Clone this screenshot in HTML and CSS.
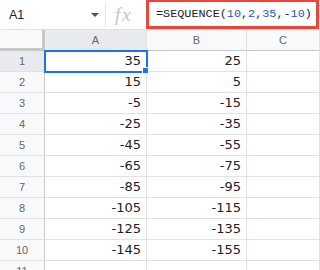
FILE: index.html
```html
<!DOCTYPE html>
<html lang="en">
<head>
    <meta charset="UTF-8">
    <meta name="viewport" content="width=device-width, initial-scale=1.0">
    <title>Sheet</title>
    <link rel="stylesheet" href="styles.css">
</head>
<body>
    <div class="sheet">
        <div class="toolbar">
            <div class="namebox">
                <span class="cell-ref">A1</span>
                <span class="caret"></span>
            </div>
            <div class="divider"></div>
            <div class="fx">fx</div>
            <div class="formula">=SEQUENCE(<span class="num">10</span>,<span class="num">2</span>,<span class="num">35</span>,-<span class="num">10</span>)</div>
        </div>
        <div class="grid" id="grid">
            <div class="corner"></div>
            <div class="col-head selected">A</div>
            <div class="col-head">B</div>
            <div class="col-head">C</div>
        </div>
    </div>

    <script>
        // fill the rows with the SEQUENCE output
        const grid = document.getElementById("grid");
        for (let i = 0; i < 11; i++) {
            const head = document.createElement("div");
            head.classList.add("row-head");
            if (i === 0) head.classList.add("selected");
            head.textContent = i + 1;
            grid.appendChild(head);

            const a = document.createElement("div");
            a.classList.add("cell");
            if (i === 0) a.classList.add("active");
            const b = document.createElement("div");
            b.classList.add("cell");
            if (i < 10) {
                a.textContent = 35 - 20 * i;
                b.textContent = 25 - 20 * i;
            }
            const c = document.createElement("div");
            c.classList.add("cell");
            grid.appendChild(a);
            grid.appendChild(b);
            grid.appendChild(c);
        }
    </script>
</body>
</html>
```

FILE: styles.css
```css
body {
    margin: 0;
    padding: 0;
    background-color: #fff;
    overflow: hidden;
    font-family: "DejaVu Sans", Verdana, sans-serif;
}

.sheet {
    width: 320px;
    height: 270px;
    overflow: hidden;
}

/* name box + fx + formula */
.toolbar {
    display: flex;
    align-items: center;
    height: 29px;
    border-bottom: 1px solid #e1e1e1;
}

.namebox {
    display: flex;
    align-items: center;
    width: 105px;
    height: 100%;
    box-sizing: border-box;
    padding-left: 9px;
    padding-right: 6px;
}

.cell-ref {
    flex-grow: 1;
    font-family: "Liberation Sans", Arial, sans-serif;
    font-size: 12.5px;
    color: #202124;
}

.caret {
    width: 0;
    height: 0;
    border-left: 4px solid transparent;
    border-right: 4px solid transparent;
    border-top: 4px solid #555;
}

.divider {
    width: 1px;
    height: 24px;
    background-color: #e3e3e3;
}

.fx {
    width: 40px;
    box-sizing: border-box;
    padding-left: 9px;
    font-family: "Liberation Serif", serif;
    font-style: italic;
    font-size: 19px;
    letter-spacing: 2px;
    color: #c4c4c4;
}

.formula {
    flex-grow: 1;
    align-self: flex-start;
    height: 30px;
    margin-top: -1px;
    margin-right: 1px;
    box-sizing: border-box;
    border: 3px solid #e4483c;
    padding-left: 7px;
    line-height: 24px;
    font-family: "Liberation Mono", "DejaVu Sans Mono", monospace;
    font-size: 11.8px;
    color: #202124;
    white-space: nowrap;
}

.formula .num {
    color: #1a55c4;
}

/* the grid itself */
.grid {
    display: grid;
    grid-template-columns: 45px 102px 100px 1fr;
    grid-auto-rows: 21px;
}

.grid > div {
    box-sizing: border-box;
    border-right: 1px solid #e2e2e3;
    border-bottom: 1px solid #e2e2e3;
}

.corner {
    background-color: #f8f9fa;
    border-right: 3px solid #c7c7c7 !important;
    border-bottom: 3px solid #c7c7c7 !important;
}

.col-head,
.row-head {
    background-color: #f8f9fa;
    font-family: "Liberation Sans", Arial, sans-serif;
    font-size: 11px;
    color: #666;
    text-align: center;
    line-height: 20px;
}

.col-head {
    border-bottom-color: #c7c7c7 !important;
}

.row-head {
    border-right-color: #c7c7c7 !important;
}

.col-head.selected,
.row-head.selected {
    background-color: #e8eaed;
}

.cell {
    padding-right: 5px;
    text-align: right;
    font-size: 13px;
    line-height: 20px;
    color: #202124;
}

.cell.active {
    position: relative;
    outline: 2px solid #1a73e8;
    outline-offset: -1px;
}

/* fill handle */
.cell.active::after {
    content: "";
    position: absolute;
    right: -3px;
    bottom: -3px;
    width: 5px;
    height: 5px;
    background-color: #1a73e8;
    border: 1px solid #fff;
}
```
